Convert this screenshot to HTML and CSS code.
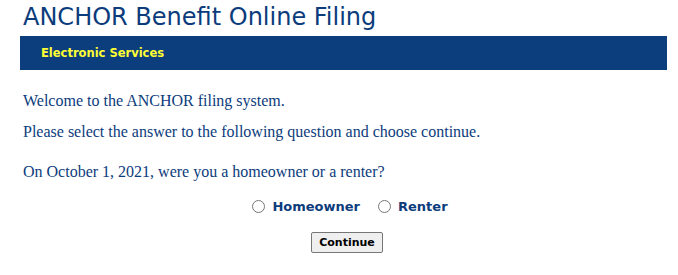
FILE: index.html
```html
<!DOCTYPE html>
<html lang="en">
<head>
    <meta charset="UTF-8">
    <title>ANCHOR Benefit Online Filing</title>
    <link rel="stylesheet" href="styles.css">
</head>
<body>
    <div class="page">
        <h1 class="page-title">ANCHOR Benefit Online Filing</h1>
        <div class="service-bar">Electronic Services</div>

        <div class="content">
            <p class="intro">Welcome to the ANCHOR filing system.</p>
            <p class="intro">Please select the answer to the following question and choose continue.</p>

            <form class="question-form">
                <p class="question">On October 1, 2021, were you a homeowner or a renter?</p>
                <div class="choices">
                    <label class="choice"><input type="radio" name="filer" value="homeowner"> Homeowner</label>
                    <label class="choice"><input type="radio" name="filer" value="renter"> Renter</label>
                </div>
                <div class="actions">
                    <button type="button" class="btn-continue">Continue</button>
                </div>
            </form>
        </div>
    </div>
</body>
</html>
```

FILE: styles.css
```css
* {
    box-sizing: border-box;
}

body {
    margin: 0;
    background: #fff;
    color: #0c3c7c;
    font-family: "Liberation Serif", "Times New Roman", serif;
    font-size: 16px;
}

.page {
    width: 647px;
    margin-left: 20px;
}

.page-title {
    margin: 0;
    padding: 2px 0 0 3px;
    height: 36px;
    font-family: "DejaVu Sans", Verdana, sans-serif;
    font-size: 24px;
    font-weight: normal;
    line-height: 30px;
    color: #0c3c7c;
}

.service-bar {
    height: 34px;
    padding-left: 21px;
    background: #0c3d7d;
    color: #ffff33;
    font-family: "DejaVu Sans", Verdana, sans-serif;
    font-size: 11.5px;
    font-weight: bold;
    line-height: 34px;
}

.content {
    padding: 21px 0 0 3px;
}

.intro {
    margin: 0 0 12px;
    line-height: 19px;
}

.question {
    margin: 21px 0 0;
    line-height: 19px;
}

.choices {
    display: flex;
    justify-content: center;
    gap: 18px;
    margin-top: 18px;
    padding-left: 10px;
    font-family: "DejaVu Sans", Verdana, sans-serif;
    font-size: 13px;
    font-weight: bold;
}

.choice {
    display: flex;
    align-items: center;
    gap: 7px;
}

.choice input {
    margin: 0;
    width: 13px;
    height: 13px;
}

.actions {
    display: flex;
    justify-content: center;
    margin-top: 18px;
    padding-left: 4px;
}

.btn-continue {
    font-family: "DejaVu Sans", Verdana, sans-serif;
    font-size: 11px;
    font-weight: bold;
    color: #000;
    background: #efefef;
    border: 1px solid #767676;
    border-radius: 2px;
    padding: 3px 7px;
}
```
